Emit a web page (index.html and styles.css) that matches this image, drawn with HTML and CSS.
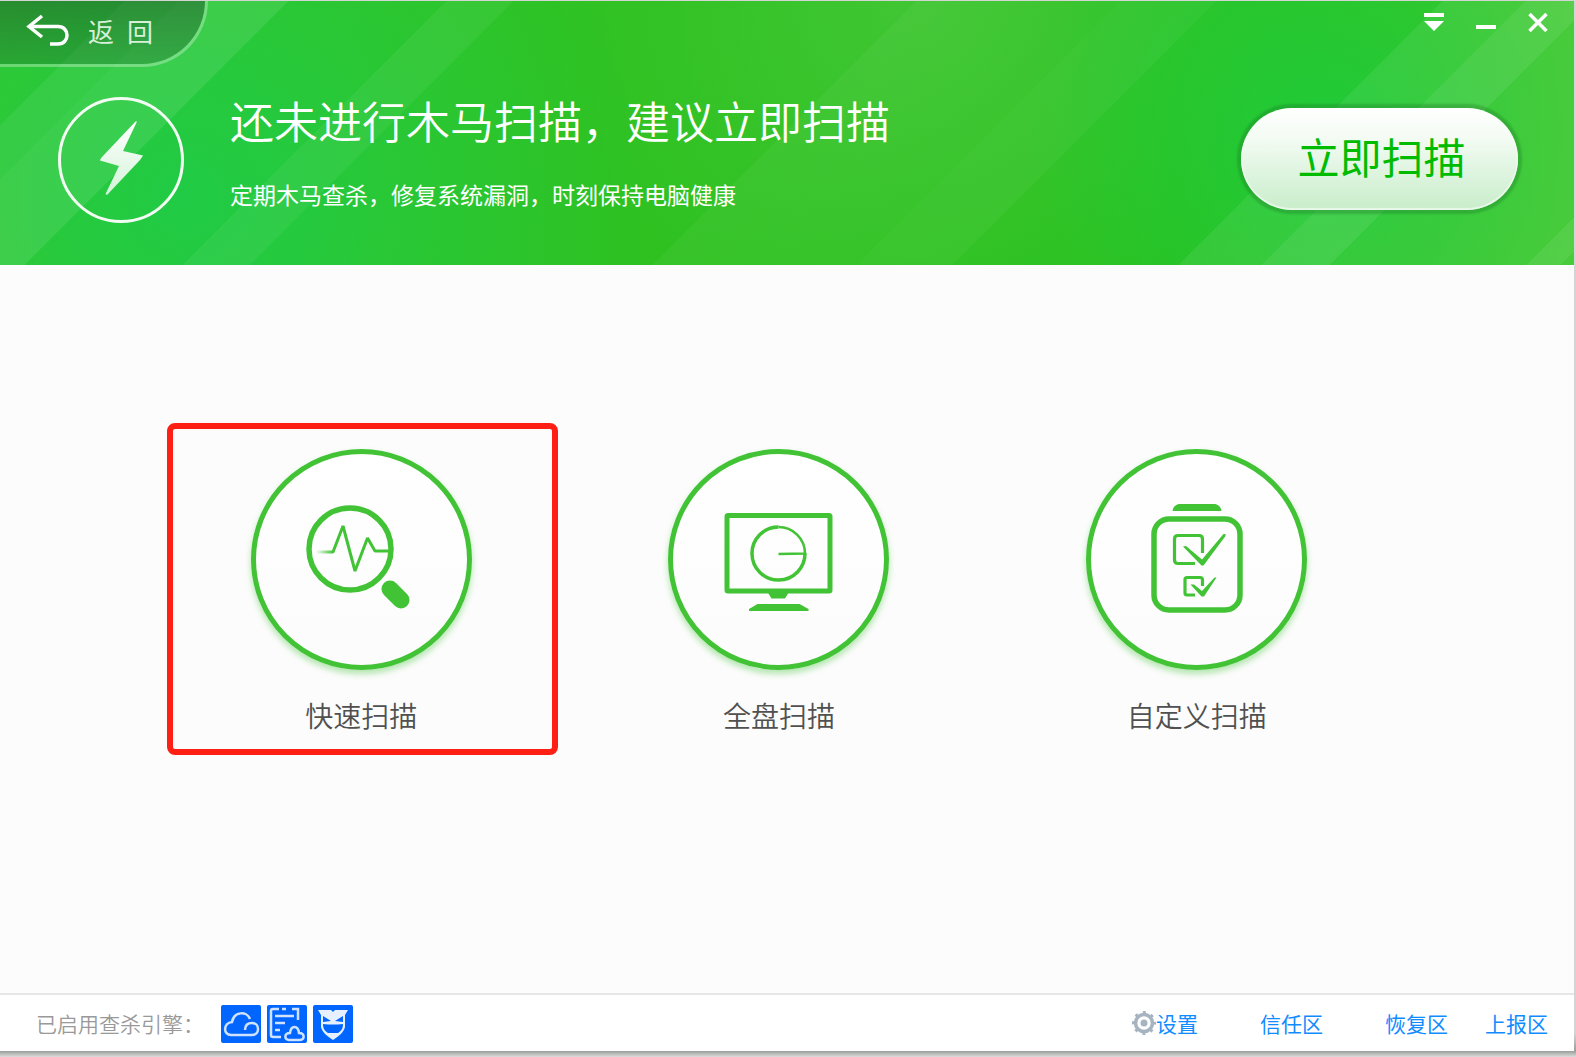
FILE: index.html
```html
<!DOCTYPE html>
<html lang="zh-CN">
<head>
    <meta charset="UTF-8">
    <meta name="viewport" content="width=device-width, initial-scale=1.0">
    <title>木马查杀</title>
    <link rel="stylesheet" href="styles.css">
</head>
<body>
    <div class="window">
        <header class="header">
            <div class="topbar">
                <button type="button" class="back">
                    <svg width="44" height="34" viewBox="0 0 44 34" fill="none" stroke="#fff" stroke-width="3.5">
                        <path d="M16 2 L3 12.5 L16 23"/>
                        <path d="M3 12.500H32C44 12.500 44 30 32 30H24"/>
                    </svg>
                    <span>返&ensp;回</span>
                </button>
                <div class="controls">
                    <button type="button" aria-label="菜单">
                        <svg width="20" height="20" viewBox="0 0 20 20" fill="#fff"><path d="M0 1H20V5H0ZM0 9H20L10 19Z"/></svg>
                    </button>
                    <button type="button" aria-label="最小化">
                        <svg width="20" height="20" viewBox="0 0 20 20" fill="#fff"><path d="M0 13H20V17H0Z"/></svg>
                    </button>
                    <button type="button" aria-label="关闭">
                        <svg width="20" height="20" viewBox="0 0 20 20" stroke="#fff" stroke-width="3.500"><path d="M1.500 2L18.500 19M18.500 2L1.500 19"/></svg>
                    </button>
                </div>
            </div>
            <div class="hero">
                <svg class="bolt" width="126" height="126" viewBox="0 0 126 126">
                    <defs>
                        <linearGradient id="boltFill" x1="0" y1="0" x2="0" y2="1">
                            <stop offset="0" stop-color="#fff"/>
                            <stop offset="1" stop-color="#d3f4d8"/>
                        </linearGradient>
                    </defs>
                    <circle cx="63" cy="63" r="61.5" fill="none" stroke="#f2fcf3" stroke-width="3"/>
                    <path d="M79 24.5L65 54L85 58.5Q84 60 82 63L49 98L47.500 97L61 69L42 63.500Q42 62 44 60L77.500 24.500Z" fill="url(#boltFill)"/>
                </svg>
                <div class="intro">
                    <h1>还未进行木马扫描，建议立即扫描</h1>
                    <p>定期木马查杀，修复系统漏洞，时刻保持电脑健康</p>
                </div>
                <button type="button" class="scan-now">立即扫描</button>
            </div>
        </header>

        <main class="modes">
            <button type="button" class="mode selected">
                <span class="ring">
                    <svg width="120" height="120" viewBox="0 0 120 120" fill="none" stroke="#42c336">
                        <defs>
                            <linearGradient id="pulse" gradientUnits="userSpaceOnUse" x1="15" y1="0" x2="32" y2="0">
                                <stop offset="0" stop-color="#42c336" stop-opacity="0"/>
                                <stop offset="1" stop-color="#42c336"/>
                            </linearGradient>
                        </defs>
                        <circle cx="49" cy="49" r="41" stroke-width="5.5"/>
                        <path d="M15 52H32L42 26L54 71L66.500 38L74 51H90" stroke="url(#pulse)" stroke-width="3" stroke-linejoin="bevel"/>
                        <path d="M89 89L100 100" stroke-width="17" stroke-linecap="round"/>
                    </svg>
                </span>
                <span class="label">快速扫描</span>
            </button>
            <button type="button" class="mode">
                <span class="ring">
                    <svg width="120" height="120" viewBox="0 0 120 120" fill="none" stroke="#42c336">
                        <rect x="8" y="15.5" width="103" height="75.5" rx="1" stroke-width="5" stroke-linejoin="round"/>
                        <path d="M86 53A26.500 26.500 0 1 1 59.500 27" stroke-width="3.500"/>
                        <path d="M59.500 27A26.500 26.500 0 0 1 86 53M59.500 54L86 53.500" stroke-width="2.500"/>
                        <path d="M48.500 92H70L66 98.500H52.500ZM38.500 104H80.500L89.500 109V111H30V109Z" fill="#42c336" stroke="none"/>
                    </svg>
                </span>
                <span class="label">全盘扫描</span>
            </button>
            <button type="button" class="mode">
                <span class="ring">
                    <svg width="120" height="120" viewBox="0 0 120 120" fill="none" stroke="#42c336">
                        <path d="M35.500 11C36 7 39 4 43 4H77C81 4 84 7 84.500 11Z" fill="#42c336" stroke="none"/>
                        <rect x="17" y="19" width="86" height="91" rx="15" stroke-width="5.5"/>
                        <path d="M58 63.500H41Q37.500 63.500 37.500 60V39Q37.500 35.500 41 35.500H62Q65.500 35.500 65.500 39V53" stroke-width="3.200"/>
                        <path d="M58 95H50Q48 95 48 93V79.500Q48 77.500 50 77.500H63Q65.500 77.500 65.500 80V86" stroke-width="3.200"/>
                        <path d="M46 46.500L49 46L65 59.500L86.500 34H88.500V36L66.500 65.500H64.500Z" fill="#42c336" stroke="none"/>
                        <path d="M53.500 84.500H57L65 91L77.500 77.500H79.500L67 96.500H64.500Z" fill="#42c336" stroke="none"/>
                    </svg>
                </span>
                <span class="label">自定义扫描</span>
            </button>
        </main>

        <footer class="footer">
            <span class="engines-title">已启用查杀引擎：</span>
            <div class="engines">
                <svg width="40" height="38" viewBox="0 0 40 38" fill="none" stroke="#cfe2ff" stroke-width="2.500">
                    <rect width="40" height="38" rx="2" fill="#06f" stroke="none"/>
                    <path d="M29 14C26 6 13 6 11 17C2 18 2 30 10 30H31C39 30 39 18 31 18C26 18 24 21 24 25"/>
                </svg>
                <svg width="40" height="38" viewBox="0 0 40 38" fill="none" stroke="#cfe2ff" stroke-width="2.500">
                    <rect width="40" height="38" rx="2" fill="#06f" stroke="none"/>
                    <path d="M12 4H6Q4 4 4 6V30Q4 32 6 32H14M15 4H19M25 4H31V15M8 11H27M8 18H18M8 25H13"/>
                    <path d="M23 28C24 20 31 20 32 28C38 28 38 35 33 35H22C17 35 17 28 23 28Z"/>
                </svg>
                <svg width="40" height="38" viewBox="0 0 40 38">
                    <rect width="40" height="38" rx="2" fill="#06f"/>
                    <path d="M5 5H35L32 10V22C31 27 26 31 20 35C14 31 9 27 8 22V10Z" fill="#e6f0ff"/>
                    <path d="M18 5H22L20 7ZM10 11L18 16L10 17ZM30 11L22 16L30 17ZM10 19Q20 20 30 19C30 24 28 26 25 28H15C12 26 10 24 10 19Z" fill="#06f"/>
                </svg>
            </div>
            <nav class="links">
                <a href="#" class="settings">
                    <svg width="24" height="24" viewBox="0 0 24 24" fill="none" stroke="#a5b4c0">
                        <circle cx="12" cy="12" r="8.500" stroke-width="3.500"/>
                        <circle cx="12" cy="12" r="10.5" stroke-width="3" stroke-dasharray="3 5.247" stroke-dashoffset="1.5"/>
                        <circle cx="12" cy="12" r="3.500" fill="#a5b4c0" stroke="none"/>
                    </svg>设置</a>
                <a href="#">信任区</a>
                <a href="#">恢复区</a>
                <a href="#" class="report">上报区</a>
            </nav>
        </footer>
    </div>
</body>
</html>
```
FILE: styles.css
```css
* {
    box-sizing: border-box;
}

body {
    margin: 0;
    min-height: 100vh;
    display: flex;
    flex-direction: column;
    padding: 1px 2px 6px 0;
    font-family: "Noto Sans CJK SC", sans-serif;
    background: linear-gradient(to top, #dcdcdc, #999e99 6px, #d4d4d4 24px);
}

button {
    font: inherit;
    border: none;
    background: none;
    padding: 0;
    cursor: pointer;
}

svg {
    display: block;
    flex: none;
}

.window {
    flex: 1;
    display: flex;
    flex-direction: column;
    background-color: #fcfcfc;
}

/* header */
.header {
    height: 264px;
    color: white;
    background:
        linear-gradient(135deg,
            transparent 88px,
            rgba(255, 255, 255, 0.06) 88px 126px,
            rgba(255, 255, 255, 0.09) 126px 204px,
            transparent 204px 316px,
            rgba(255, 255, 255, 0.05) 316px 363px,
            transparent 363px 648px,
            rgba(255, 255, 255, 0.04) 648px,
            rgba(255, 255, 255, 0.02) 792px,
            rgba(255, 255, 255, 0.04) 792px 860px,
            transparent 860px 1020px,
            rgba(255, 255, 255, 0.07) 1020px 1079px,
            rgba(255, 255, 255, 0.13) 1079px 1127px,
            rgba(255, 255, 255, 0.06) 1127px 1266px,
            rgba(255, 255, 255, 0.12) 1266px 1290px,
            rgba(255, 255, 255, 0.06) 1290px),
        radial-gradient(circle at 12% 75%, #20cb45, rgba(32, 203, 69, 0) 460px),
        radial-gradient(circle at 84% 50%, #20ca38, rgba(32, 202, 56, 0) 300px),
        radial-gradient(circle at 58% 0%, #40c633, rgba(64, 198, 51, 0) 360px),
        linear-gradient(to right, #3ac62a, #2ec120 40%, #2bc120 75%, #40c82e);
}

.topbar {
    display: flex;
    justify-content: space-between;
    align-items: flex-start;
    height: 67px;
}

.back {
    display: flex;
    align-items: center;
    gap: 18px;
    width: 208px;
    height: 66px;
    padding: 0 0 4px 26px;
    color: #d8f0da;
    font-size: 26px;
    border: solid rgba(255, 255, 255, 0.3);
    border-width: 0 3px 3px 0;
    border-bottom-right-radius: 66px;
    background: linear-gradient(rgba(30, 60, 40, 0.42), rgba(30, 60, 40, 0.24)) padding-box;
}

.controls {
    display: flex;
    gap: 32px;
    padding: 11px 26px 0 0;
}

.hero {
    display: flex;
    align-items: flex-start;
    padding: 22px 56px 0 58px;
}

.bolt {
    margin-top: 7px;
}

.intro {
    flex: 1;
    margin-left: 46px;
}

.intro h1 {
    margin: 0;
    font-size: 44px;
    font-weight: 350;
    line-height: 60px;
}

.intro p {
    margin: 28px 0 0;
    font-size: 23px;
    line-height: 32px;
}

.scan-now {
    width: 277px;
    height: 102px;
    margin-top: 18px;
    padding: 0 0 8px 4px;
    border-radius: 51px;
    color: #00bc00;
    font-size: 42px;
    background: linear-gradient(#fff, #f3fbf3 30%, #c8edca);
    box-shadow: inset 0 -1px 1px 1px rgba(255, 255, 255, 0.6), 0 0 2px 4px rgba(30, 110, 40, 0.3);
}

/* scan modes */
.modes {
    flex: 1;
    display: grid;
    grid-template-columns: repeat(3, 1fr);
    align-items: start;
    gap: 27px;
    padding: 158px 181px 40px 167px;
}

.mode {
    display: flex;
    flex-direction: column;
    align-items: center;
    padding: 20px 2px 14px 0;
    border: 6px solid transparent;
    border-radius: 8px;
}

.mode.selected {
    border-color: #ff2015;
}

.ring {
    display: flex;
    justify-content: center;
    align-items: center;
    width: 221px;
    height: 221px;
    border: 5px solid #42c336;
    border-radius: 50%;
    background: linear-gradient(white, #fcfcfc);
    box-shadow: 0 4px 6px rgba(66, 195, 54, 0.4);
}

.label {
    margin-top: 25px;
    color: #505050;
    font-size: 28px;
    font-weight: 350;
    line-height: 40px;
}

/* footer */
.footer {
    display: flex;
    align-items: center;
    height: 58px;
    padding: 0 26px 0 36px;
    font-size: 21px;
    border-top: 2px solid #e6e6e6;
    background-color: white;
}

.engines-title {
    color: #999;
    font-weight: 350;
}

.engines {
    display: flex;
    gap: 6px;
    margin: 2px 0 0 17px;
}

.links {
    display: flex;
    gap: 62px;
    margin-left: auto;
}

.links a {
    color: #108cff;
    text-decoration: none;
}

.links .settings {
    display: flex;
    align-items: center;
}

.links .report {
    margin-left: -25px;
}
```
